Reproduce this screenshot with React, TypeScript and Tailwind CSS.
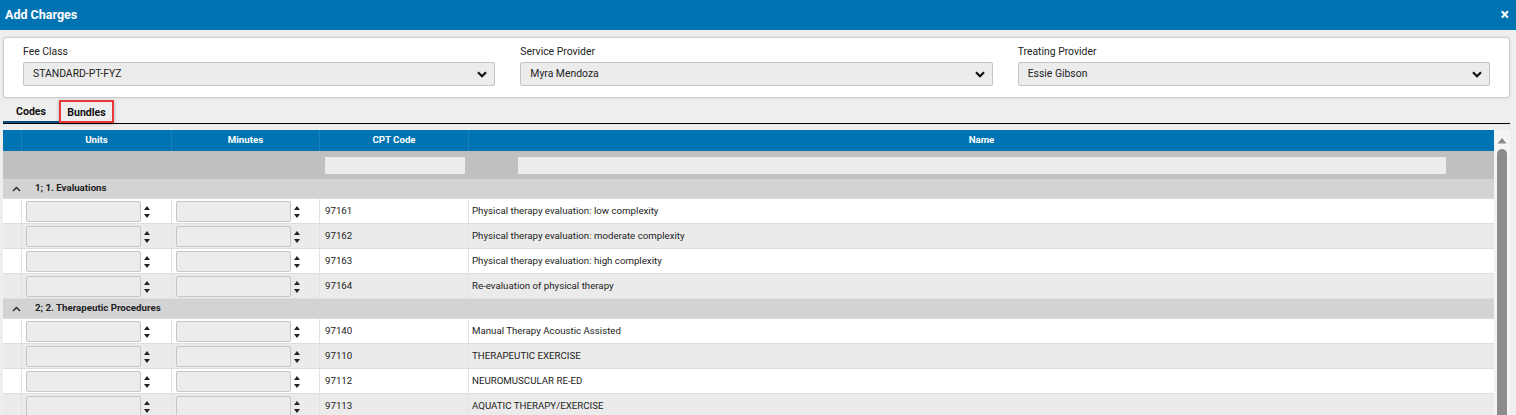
import React from "react";

const groups = [
  {
    title: "1; 1. Evaluations",
    rows: [
      ["97161", "Physical therapy evaluation: low complexity"],
      ["97162", "Physical therapy evaluation: moderate complexity"],
      ["97163", "Physical therapy evaluation: high complexity"],
      ["97164", "Re-evaluation of physical therapy"],
    ],
  },
  {
    title: "2; 2. Therapeutic Procedures",
    rows: [
      ["97140", "Manual Therapy Acoustic Assisted"],
      ["97110", "THERAPEUTIC EXERCISE"],
      ["97112", "NEUROMUSCULAR RE-ED"],
      ["97113", "AQUATIC THERAPY/EXERCISE"],
    ],
  },
];

const cols = "grid grid-cols-[19px_150px_148px_149px_1fr]";

function Select({ label, value }: { label: string; value: string }) {
  return (
    <div className="flex flex-col">
      <div className="h-[24px] pt-[6px] text-[10.4px] text-[#222]">{label}</div>
      <div className="flex h-[24px] items-center justify-between rounded-[2px] border border-[#c4c4c4] bg-[#ececec] pl-[9px] pr-[7px] text-[10.4px] text-[#222]">
        <span>{value}</span>
        <svg width="10" height="7" viewBox="0 0 10 7">
          <path d="M1 1.2 L5 5.2 L9 1.2" fill="none" stroke="#111" strokeWidth="2.2" />
        </svg>
      </div>
    </div>
  );
}

function Spinner() {
  return (
    <div className="flex flex-col items-center gap-[4px] pt-[1px]">
      <svg width="6" height="4" viewBox="0 0 6 4">
        <path d="M0 4 L3 0 L6 4 Z" fill="#222" />
      </svg>
      <svg width="6" height="4" viewBox="0 0 6 4">
        <path d="M0 0 L3 4 L6 0 Z" fill="#222" />
      </svg>
    </div>
  );
}

function NumInput() {
  return (
    <div className="flex items-center gap-[3px] pl-[4px]">
      <div className="h-[21px] w-[115px] rounded-[2px] border border-[#c6c6c6] bg-[#ececec]" />
      <Spinner />
    </div>
  );
}

export default function App() {
  return (
    <div
      className="h-[415px] w-[1516px] overflow-hidden bg-[#eeeeee]"
      style={{ fontFamily: "Roboto, 'Liberation Sans', sans-serif" }}
    >
      <div className="flex h-[30px] items-center justify-between bg-[#0073b2] pl-[5px] pr-[7px]">
        <span className="text-[12.5px] font-bold text-white">Add Charges</span>
        <span className="text-[16px] font-bold leading-none text-white">×</span>
      </div>

      <div className="ml-[4px] mr-[7px] mt-[8px] grid h-[59px] grid-cols-3 gap-[25px] rounded-[3px] bg-white px-[19px] shadow-[0_0_2px_1px_rgba(0,0,0,0.18)]">
        <Select label="Fee Class" value="STANDARD-PT-FYZ" />
        <Select label="Service Provider" value="Myra Mendoza" />
        <Select label="Treating Provider" value="Essie Gibson" />
      </div>

      <div className="ml-[3px] mr-[6px] mt-[3px] flex h-[24px] items-stretch border-b border-black text-[10.6px] font-bold text-[#111]">
        <div className="flex w-[56px] items-center justify-center border-b-2 border-[#0a4f80] pt-[2px]">Codes</div>
        <div className="flex w-[55px] items-center justify-center border-2 border-[#e53935] pt-[2px] shadow-[0_1px_3px_rgba(0,0,0,0.3)]">
          Bundles
        </div>
      </div>

      <div className="ml-[3px] mr-[6px] mt-[6px] flex">
        <div className="flex-1 text-[9.7px] text-[#222]">
          <div className={`${cols} h-[21px] bg-[#0073b2] font-bold text-white`}>
            <div className="border-r border-[#1a80bb]" />
            <div className="flex items-center justify-center border-r border-[#1a80bb]">Units</div>
            <div className="flex items-center justify-center border-r border-[#1a80bb]">Minutes</div>
            <div className="flex items-center justify-center border-r border-[#1a80bb]">CPT Code</div>
            <div className="flex items-center justify-center">Name</div>
          </div>
          <div className={`${cols} h-[28px] items-center bg-[#c0c0c0]`}>
            <div />
            <div />
            <div />
            <div className="pl-[5px] pr-[4px]">
              <div className="h-[17px] bg-[#ececec]" />
            </div>
            <div className="pl-[49px] pr-[48px]">
              <div className="h-[17px] bg-[#ececec]" />
            </div>
          </div>
          {groups.map((g) => (
            <div key={g.title}>
              <div className="flex h-[20px] items-center border-b border-[#dcdcdc] bg-[#d3d3d3] font-bold">
                <svg width="19" height="8" viewBox="0 0 19 8" className="ml-[4px]">
                  <path d="M6 6 L9.5 2.5 L13 6" fill="none" stroke="#222" strokeWidth="1.4" />
                </svg>
                <span className="ml-[9px]">{g.title}</span>
              </div>
              {g.rows.map((r, i) => (
                <div
                  key={r[0]}
                  className={`${cols} h-[25px] items-center border-b border-[#dedede] ${i % 2 ? "bg-[#ebebeb]" : "bg-white"}`}
                >
                  <div className="h-full border-r border-[#e2e2e2]" />
                  <div className="flex h-full items-center border-r border-[#e2e2e2]">
                    <NumInput />
                  </div>
                  <div className="flex h-full items-center border-r border-[#e2e2e2]">
                    <NumInput />
                  </div>
                  <div className="flex h-full items-center border-r border-[#e2e2e2] pl-[5px]">{r[0]}</div>
                  <div className="flex h-full items-center pl-[3px]">{r[1]}</div>
                </div>
              ))}
            </div>
          ))}
        </div>
        <div className="flex w-[16px] flex-col items-center bg-[#f4f4f4]">
          <svg width="10" height="7" viewBox="0 0 10 7" className="mt-[7px]">
            <path d="M0.5 6.5 L5 1 L9.5 6.5 Z" fill="#8a8a8a" />
          </svg>
          <div className="mt-[5px] h-[400px] w-[10px] rounded-t-full bg-[#8c8c8c]" />
        </div>
      </div>
    </div>
  );
}
